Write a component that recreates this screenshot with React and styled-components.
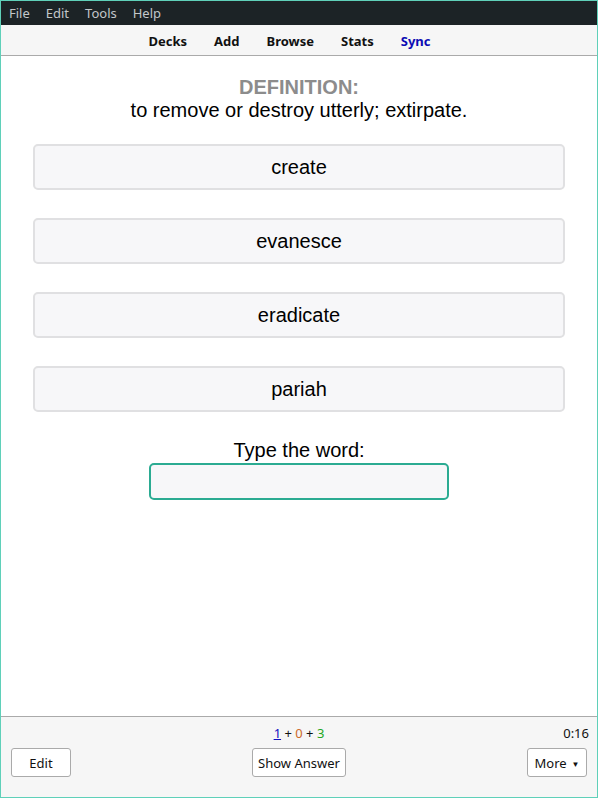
import React from "react";
import styled, { createGlobalStyle } from "styled-components";

const Global = createGlobalStyle`
  html, body { margin: 0; padding: 0; background: #fff; }
  * { box-sizing: border-box; }
`;

const Window = styled.div`
  width: 598px;
  height: 798px;
  display: flex;
  flex-direction: column;
  border: 1px solid #5fd0b9;
  border-top: none;
  overflow: hidden;
`;

const MenuBar = styled.div`
  height: 25px;
  margin: 0 -1px;
  background: #1c2326;
  border-top: 1px solid #5fd0b9;
  display: flex;
  align-items: center;
  gap: 16px;
  padding-left: 9px;
  font-family: "Noto Sans", sans-serif;
  font-size: 13px;
  color: #c3c7ca;
`;

const MenuItem = styled.span``;

const Toolbar = styled.div`
  height: 31px;
  background: #f6f6f6;
  border-bottom: 1px solid #aaaaaa;
  display: flex;
  align-items: center;
  justify-content: center;
  gap: 27px;
  padding-right: 19px;
  padding-top: 2px;
  font-family: "Noto Sans", sans-serif;
  font-size: 13px;
  font-weight: bold;
`;

const NavLink = styled.span`
  color: ${(p) => (p.$active ? "#0b0bb4" : "#111")};
`;

const Content = styled.div`
  flex: 1;
  background: #fff;
  display: flex;
  flex-direction: column;
  align-items: center;
  padding: 20px 32px 0;
  font-family: "Liberation Sans", Arial, sans-serif;
  color: #000;
`;

const Heading = styled.div`
  font-size: 20px;
  font-weight: bold;
  color: #8c8c8c;
  line-height: 23px;
`;

const Definition = styled.div`
  font-size: 20px;
  line-height: 23px;
  margin-bottom: 22px;
`;

const Choices = styled.div`
  width: 100%;
  display: flex;
  flex-direction: column;
  gap: 28px;
`;

const Choice = styled.div`
  height: 46px;
  border: 2px solid #e0e0e2;
  border-radius: 5px;
  background: #f7f7f9;
  display: flex;
  align-items: center;
  justify-content: center;
  font-size: 20px;
`;

const Prompt = styled.div`
  margin-top: 27px;
  font-size: 20px;
  line-height: 23px;
`;

const Input = styled.div`
  width: 300px;
  height: 37px;
  border: 2px solid #2bab92;
  border-radius: 5px;
  background: #f7f7f9;
  margin-top: 1px;
`;

const Bottom = styled.div`
  height: 81px;
  background: #f6f6f6;
  border-top: 1px solid #aaaaaa;
  display: grid;
  grid-template-columns: 1fr auto 1fr;
  grid-template-rows: 31px 30px;
  padding: 0 10px;
  font-family: "Noto Sans", sans-serif;
  font-size: 13px;
  color: #111;
`;

const Counts = styled.div`
  grid-column: 2;
  grid-row: 1;
  align-self: center;
  justify-self: center;
`;

const Time = styled.div`
  grid-column: 3;
  grid-row: 1;
  align-self: center;
  justify-self: end;
  margin-right: -2px;
`;

const Num = styled.span`
  color: ${(p) => p.$c};
  text-decoration: ${(p) => (p.$u ? "underline" : "none")};
`;

const Btn = styled.div`
  grid-row: 2;
  grid-column: ${(p) => p.$col};
  justify-self: ${(p) => p.$justify};
  height: 29px;
  min-width: ${(p) => p.$w || "auto"};
  padding: 1px 5px 0;
  border: 1px solid #aaaaaa;
  border-radius: 3px;
  background: #fff;
  display: flex;
  align-items: center;
  justify-content: center;
  gap: 5px;
  font-size: 13px;
  color: #111;
`;

const Caret = styled.span`
  font-size: 8px;
`;

export default function App() {
  return (
    <>
      <Global />
      <Window>
        <MenuBar>
          <MenuItem>File</MenuItem>
          <MenuItem>Edit</MenuItem>
          <MenuItem>Tools</MenuItem>
          <MenuItem>Help</MenuItem>
        </MenuBar>
        <Toolbar>
          <NavLink>Decks</NavLink>
          <NavLink>Add</NavLink>
          <NavLink>Browse</NavLink>
          <NavLink>Stats</NavLink>
          <NavLink $active>Sync</NavLink>
        </Toolbar>
        <Content>
          <Heading>DEFINITION:</Heading>
          <Definition>to remove or destroy utterly; extirpate.</Definition>
          <Choices>
            <Choice>create</Choice>
            <Choice>evanesce</Choice>
            <Choice>eradicate</Choice>
            <Choice>pariah</Choice>
          </Choices>
          <Prompt>Type the word:</Prompt>
          <Input />
        </Content>
        <Bottom>
          <Counts>
            <Num $c="#1010c0" $u>1</Num> + <Num $c="#cc6a28">0</Num> +{" "}
            <Num $c="#22a622">3</Num>
          </Counts>
          <Time>0:16</Time>
          <Btn $col={1} $justify="start" $w="60px">Edit</Btn>
          <Btn $col={2} $justify="center">Show Answer</Btn>
          <Btn $col={3} $justify="end" $w="60px">
            More <Caret>▼</Caret>
          </Btn>
        </Bottom>
      </Window>
    </>
  );
}
